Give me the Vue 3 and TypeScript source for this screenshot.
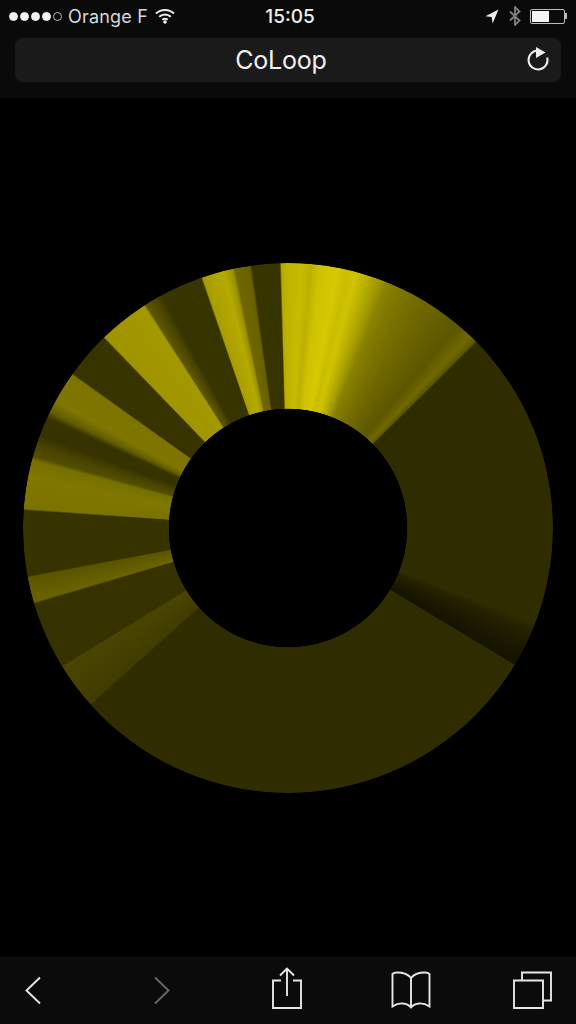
<script setup lang="ts">
const dots: boolean[] = [true, true, true, true, false]
</script>

<template>
  <div class="screen">
    <header class="chrome">
      <div class="status">
        <div class="status-left">
          <span class="signal">
            <i v-for="(on, n) in dots" :key="n" class="dot" :class="{ on }"></i>
          </span>
          <span class="carrier">Orange F</span>
          <svg class="wifi" width="20" height="16" viewBox="0 0 20 16">
            <path d="M1 5.5C6 0.7 14 0.7 19 5.5" />
            <path d="M4.2 8.7C7.6 5.6 12.4 5.6 15.8 8.7" />
            <path d="M7.3 11.7C9 10.4 11 10.4 12.7 11.7" />
            <circle cx="10" cy="14" r="1.8" />
          </svg>
        </div>
        <div class="time">15:05</div>
        <div class="status-right">
          <svg class="loc" width="14" height="15" viewBox="0 0 14 15">
            <path d="M13.5 0.5L0.5 7.2L6.6 8L7.6 14.6Z" />
          </svg>
          <svg class="bt" width="12" height="20" viewBox="0 0 12 20">
            <path d="M1 5.5L10.5 14.5L6 19V1L10.5 5.5L1 14.5" />
          </svg>
          <div class="battery">
            <div class="battery-body"><div class="battery-fill"></div></div>
            <div class="battery-nub"></div>
          </div>
        </div>
      </div>
      <div class="urlbar">
        <span class="title">CoLoop</span>
        <svg class="reload" width="26" height="26" viewBox="0 0 26 26">
          <path class="reload-arc" d="M22.2 10.5A9.5 9.5 0 1 1 13 3.5" />
          <path class="reload-head" d="M11 0L20.5 5.5L11 11Z" />
        </svg>
      </div>
    </header>

    <main class="stage">
      <div class="donut"></div>
    </main>

    <footer class="toolbar">
      <svg class="tool" width="48" height="48" viewBox="0 0 48 48">
        <path d="M31 10.5L17.5 23.5L31 36.5" />
      </svg>
      <svg class="tool off" width="48" height="48" viewBox="0 0 48 48">
        <path d="M17 10.5L30.5 23.5L17 36.5" />
      </svg>
      <svg class="tool" width="48" height="48" viewBox="0 0 48 48">
        <path d="M18 13.5H10V41H38V13.5H30" />
        <path d="M24 2V29M17 8.5L24 1.5L31 8.5" />
      </svg>
      <svg class="tool" width="48" height="48" viewBox="0 0 48 48">
        <path d="M24 11C21 7 15 5.5 10 5.5Q7 5.5 5.5 7V39.5C12 35 20 35.5 24 40.5C28 35.5 36 35 42.5 39.5V7Q41 5.5 38 5.5C33 5.5 27 7 24 11V40" />
      </svg>
      <svg class="tool" width="48" height="48" viewBox="0 0 48 48">
        <path d="M6 13.5H35V41H6Z" />
        <path d="M14 13.5V5.5H43V33.5H35" />
      </svg>
    </footer>
  </div>
</template>

<style scoped>
.screen {
  width: 576px;
  height: 1024px;
  display: flex;
  flex-direction: column;
  background: #000;
  color: #f0f0f0;
  font-family: Inter, "Liberation Sans", sans-serif;
  overflow: hidden;
}
.chrome {
  height: 98px;
  flex: none;
  background: #0a0a0a;
  display: flex;
  flex-direction: column;
}
.status {
  height: 32px;
  flex: none;
  display: grid;
  grid-template-columns: 1fr auto 1fr;
  align-items: center;
  padding: 0 9px 0 9px;
}
.status-left {
  display: flex;
  align-items: center;
}
.signal {
  display: flex;
  gap: 2px;
}
.dot {
  width: 9px;
  height: 9px;
  border-radius: 50%;
  border: 1px solid #bbb;
  box-sizing: border-box;
}
.dot.on {
  background: #f2f2f2;
  border-color: #f2f2f2;
}
.carrier {
  margin-left: 6px;
  font-size: 18px;
  color: #d8d8d8;
  letter-spacing: 0.2px;
}
.wifi {
  margin-left: 7px;
  fill: #eee;
}
.wifi path {
  fill: none;
  stroke: #eee;
  stroke-width: 2;
}
.time {
  font-size: 19px;
  font-weight: 500;
  color: #eee;
  transform: translateX(2px);
}
.status-right {
  display: flex;
  align-items: center;
  justify-content: flex-end;
}
.loc {
  fill: #eee;
}
.bt {
  margin-left: 10px;
  fill: none;
  stroke: #808080;
  stroke-width: 1.8;
}
.battery {
  margin-left: 9px;
  display: flex;
  align-items: center;
}
.battery-body {
  width: 35px;
  height: 15px;
  box-sizing: border-box;
  border: 1px solid #bdbdbd;
  border-radius: 2px;
  padding: 1px;
}
.battery-fill {
  width: 17px;
  height: 100%;
  background: #f4f4f4;
}
.battery-nub {
  width: 2px;
  height: 6px;
  background: #bdbdbd;
}
.urlbar {
  margin: 6px 15px 0;
  height: 44px;
  flex: none;
  background: #1a1a1a;
  border-radius: 8px;
  display: flex;
  align-items: center;
  padding: 0 10px 0 22px;
}
.title {
  flex: 1;
  text-align: center;
  font-size: 25px;
  color: #f0f0f0;
  letter-spacing: -0.2px;
}
.reload {
  flex: none;
}
.reload-arc {
  fill: none;
  stroke: #eee;
  stroke-width: 2;
}
.reload-head {
  fill: #eee;
}
.stage {
  flex: 1;
  display: flex;
  align-items: center;
  justify-content: center;
  background: #000;
}
.donut {
  width: 530px;
  height: 530px;
  flex: none;
  border-radius: 50%;
  background: conic-gradient(
    #c0b400 0deg,
    #c8bb00 3deg,
    #bdb100 5deg,
    #cfc200 7deg,
    #d6c900 11deg,
    #c9bd00 13deg,
    #d0c300 15deg,
    #baaf00 17.5deg,
    #a39900 20deg,
    #8a8200 22deg,
    #7e7700 25deg,
    #716a00 30deg,
    #666000 35deg,
    #5c5600 40deg,
    #706900 43.5deg,
    #5c5600 45deg,
    #2f2c00 45.6deg,
    #2f2c00 111deg,
    #242200 113deg,
    #1b1900 117deg,
    #141300 121deg,
    #2f2c00 121.2deg,
    #2f2c00 228deg,
    #403c00 228.4deg,
    #4a4500 238.2deg,
    #363200 238.8deg,
    #363200 253.3deg,
    #6a6300 253.8deg,
    #5a5400 259.2deg,
    #373300 259.6deg,
    #373300 273.8deg,
    #7b7300 274.2deg,
    #7f7700 281deg,
    #757000 284.8deg,
    #524d00 285.8deg,
    #4a4500 288deg,
    #373300 290.5deg,
    #373300 294.6deg,
    #625c00 296deg,
    #7e7600 298.5deg,
    #7c7400 305.3deg,
    #373300 305.7deg,
    #383400 315.8deg,
    #a09500 316.2deg,
    #a39800 327deg,
    #5e5800 327.5deg,
    #4a4500 330deg,
    #383400 331.5deg,
    #383400 340.8deg,
    #a89d00 341.2deg,
    #b5aa00 346deg,
    #9c9200 347.8deg,
    #6e6700 348.5deg,
    #686100 351.6deg,
    #383400 352.2deg,
    #383400 358.2deg,
    #b5aa00 358.6deg,
    #c0b400 360deg
  );
  -webkit-mask: radial-gradient(circle, transparent 119px, #000 119.6px);
  mask: radial-gradient(circle, transparent 119px, #000 119.6px);
}
.toolbar {
  height: 67px;
  flex: none;
  background: #0b0b0b;
  display: grid;
  grid-template-columns: 66px 192px 58px 190px 52px;
  justify-items: center;
  align-items: center;
}
.tool {
  overflow: visible;
  fill: none;
  stroke: #e6e6e6;
  stroke-width: 1.9;
}
.tool.off {
  stroke: #666;
}
</style>
